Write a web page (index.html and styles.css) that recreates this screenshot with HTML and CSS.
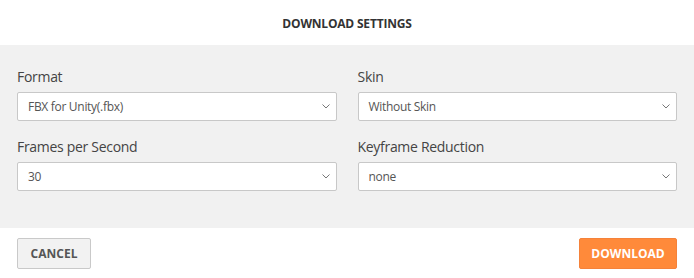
FILE: index.html
```html
<!DOCTYPE html>
<html>
<head>
<meta charset="utf-8">
<link rel="stylesheet" href="styles.css">
</head>
<body>
<div class="dialog">
  <div class="header">DOWNLOAD SETTINGS</div>
  <div class="body">
    <div class="grid">
      <div class="field">
        <div class="label">Format</div>
        <div class="select"><span>FBX for Unity(.fbx)</span><svg class="chev" width="8" height="5" viewBox="0 0 8 5"><path d="M0.5 0.5 L4 4 L7.5 0.5" fill="none" stroke="#777" stroke-width="1"/></svg></div>
      </div>
      <div class="field">
        <div class="label">Skin</div>
        <div class="select"><span>Without Skin</span><svg class="chev" width="8" height="5" viewBox="0 0 8 5"><path d="M0.5 0.5 L4 4 L7.5 0.5" fill="none" stroke="#777" stroke-width="1"/></svg></div>
      </div>
      <div class="field">
        <div class="label">Frames per Second</div>
        <div class="select"><span>30</span><svg class="chev" width="8" height="5" viewBox="0 0 8 5"><path d="M0.5 0.5 L4 4 L7.5 0.5" fill="none" stroke="#777" stroke-width="1"/></svg></div>
      </div>
      <div class="field">
        <div class="label">Keyframe Reduction</div>
        <div class="select"><span>none</span><svg class="chev" width="8" height="5" viewBox="0 0 8 5"><path d="M0.5 0.5 L4 4 L7.5 0.5" fill="none" stroke="#777" stroke-width="1"/></svg></div>
      </div>
    </div>
  </div>
  <div class="footer">
    <button class="btn cancel">CANCEL</button>
    <button class="btn download">DOWNLOAD</button>
  </div>
</div>
</body>
</html>
```

FILE: styles.css
```css
html, body {
  margin: 0;
  padding: 0;
  background: #fff;
}
body {
  font-family: "Open Sans", "Noto Sans", sans-serif;
  width: 694px;
  height: 278px;
  overflow: hidden;
}
.dialog {
  display: flex;
  flex-direction: column;
  height: 278px;
}
.header {
  height: 45px;
  display: flex;
  align-items: center;
  justify-content: center;
  font-size: 12px;
  font-weight: 700;
  color: #333;
  letter-spacing: -0.2px;
  padding-top: 1px;
  box-sizing: border-box;
}
.body {
  background: #f1f1f1;
  height: 183px;
  box-sizing: border-box;
  padding: 23px 17px 0 17px;
}
.grid {
  display: grid;
  grid-template-columns: 1fr 1fr;
  column-gap: 21px;
  row-gap: 17px;
}
.label {
  font-size: 14px;
  line-height: 18px;
  color: #444;
  margin-bottom: 6px;
  letter-spacing: -0.3px;
}
.select {
  height: 29px;
  box-sizing: border-box;
  background: #fff;
  border: 1px solid #c8c8c8;
  border-radius: 2px;
  display: flex;
  align-items: center;
  justify-content: space-between;
  padding: 0 6px 0 10px;
  font-size: 12px;
  color: #555;
  letter-spacing: -0.3px;
}
.chev {
  display: block;
}
.footer {
  flex: 1;
  display: flex;
  justify-content: space-between;
  align-items: flex-start;
  padding: 10px 17px 0 17px;
}
.btn {
  height: 31px;
  padding: 0;
  font-family: "Open Sans", "Noto Sans", sans-serif;
  font-size: 12px;
  font-weight: 700;
  border-radius: 2px;
  box-sizing: border-box;
  cursor: pointer;
  letter-spacing: 0;
}
.cancel {
  width: 74px;
  background: #f2f2f2;
  border: 1px solid #c9c9c9;
  color: #555;
}
.download {
  width: 98px;
  background: #ff8a3a;
  border: 1px solid #f5823a;
  color: #fff;
}
```
